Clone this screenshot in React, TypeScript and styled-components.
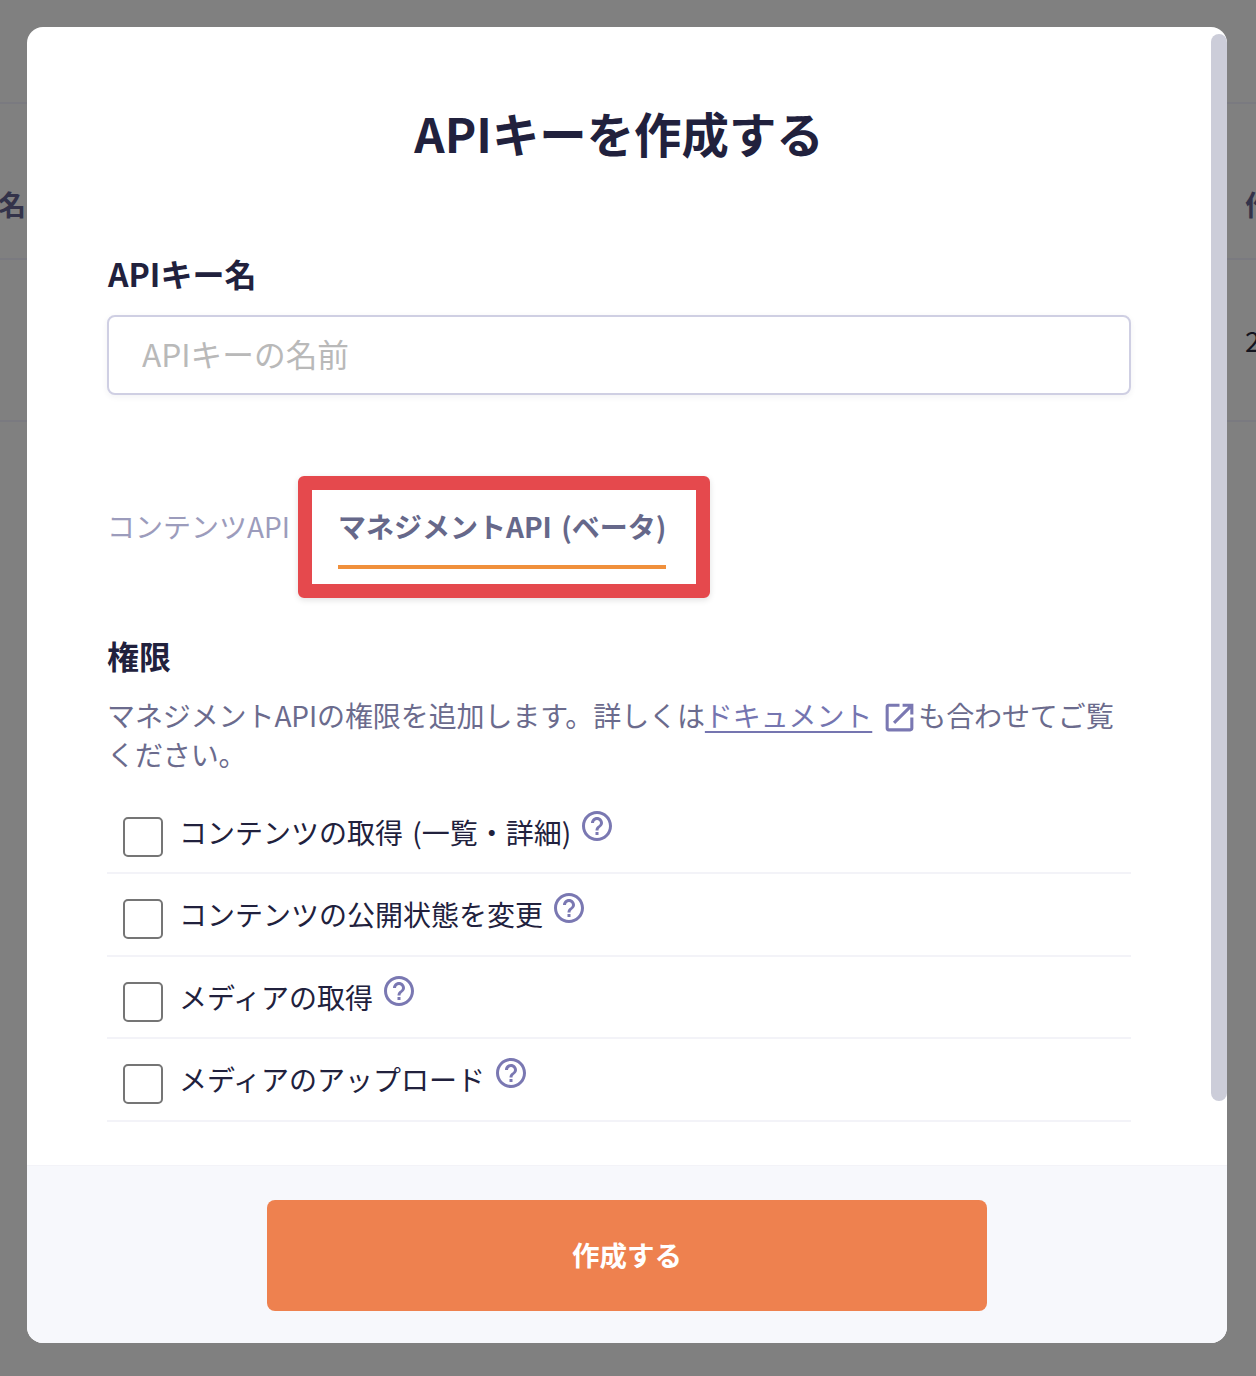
import React from 'react';
import styled, { createGlobalStyle } from 'styled-components';
import { MdHelpOutline, MdOpenInNew } from 'react-icons/md';

const GlobalStyle = createGlobalStyle`
  html, body {
    margin: 0;
    padding: 0;
    background: #808080;
  }

  * {
    box-sizing: border-box;
  }

  body {
    font-family: "Noto Sans CJK JP", "Noto Sans", sans-serif;
  }
`;

const Page = styled.div`
  position: relative;
  width: 1256px;
  height: 1376px;
  overflow: hidden;
  background: #808080;
`;

const Table = styled.div`
  padding-top: 102px;
`;

const TableRow = styled.div<{ $height: number; $offset?: number }>`
  display: flex;
  align-items: center;
  justify-content: space-between;
  height: ${(p) => p.$height}px;
  padding-top: ${(p) => p.$offset ?? 0}px;
  border-top: 2px solid #7a7a80;
`;

const LeftCell = styled.div`
  width: 26px;
  font-size: 28px;
  font-weight: 700;
  color: #33334a;
  direction: rtl;
  white-space: nowrap;
  overflow: hidden;
`;

const RightCell = styled.div<{ $strong?: boolean }>`
  width: 11px;
  margin-left: auto;
  font-size: 28px;
  font-weight: ${(p) => (p.$strong ? 700 : 400)};
  color: ${(p) => (p.$strong ? '#33334a' : '#14141f')};
  white-space: nowrap;
  overflow: hidden;
`;

const Modal = styled.div`
  position: absolute;
  top: 27px;
  left: 27px;
  display: flex;
  flex-direction: column;
  width: 1200px;
  height: 1316px;
  border-radius: 16px;
  background: #fff;
  overflow: hidden;
`;

const Scrollbar = styled.div`
  position: absolute;
  top: 7px;
  right: 0;
  width: 16px;
  height: 1067px;
  border-radius: 8px;
  background: #cccdd9;
`;

const Body = styled.div`
  flex: 1;
  padding: 72px 96px 0 80px;
`;

const Title = styled.h1`
  margin: 0;
  text-align: center;
  font-size: 47.4px;
  line-height: 68px;
  font-weight: 700;
  color: #21213d;
`;

const FieldLabel = styled.label`
  display: block;
  margin: 84px 0 0 1px;
  font-size: 32px;
  line-height: 44px;
  font-weight: 700;
  color: #21213d;
`;

const TextInput = styled.input`
  display: block;
  width: 100%;
  height: 80px;
  margin-top: 20px;
  padding: 0 32px 4px 33px;
  border: 2px solid #cfcfe3;
  border-radius: 8px;
  outline: none;
  box-shadow: 0 2px 6px rgba(33, 33, 61, 0.06);
  font-family: inherit;
  font-size: 31.7px;
  color: #21213d;

  &::placeholder {
    color: #b9b9b9;
    opacity: 1;
  }
`;

const Tabs = styled.div`
  display: flex;
  gap: 48px;
  margin-top: 112px;
`;

const Tab = styled.div<{ $active?: boolean }>`
  position: relative;
  padding-bottom: 20px;
  border-bottom: 4px solid ${(p) => (p.$active ? '#f0903c' : 'transparent')};
  font-size: 28px;
  line-height: 38px;
  word-spacing: 3px;
  font-weight: ${(p) => (p.$active ? 700 : 400)};
  color: ${(p) => (p.$active ? '#66688a' : '#9c9cbc')};
  white-space: nowrap;
`;

const Highlight = styled.div`
  position: absolute;
  top: -31px;
  right: -44px;
  bottom: -33px;
  left: -40px;
  border: 14px solid #e5494d;
  border-radius: 6px;
  box-shadow: 0 2px 6px rgba(0, 0, 0, 0.12);
  pointer-events: none;
`;

const SectionTitle = styled.h2`
  margin: 64px 0 0;
  font-size: 32px;
  line-height: 44px;
  font-weight: 700;
  color: #21213d;
`;

const Description = styled.p`
  margin: 19px 0 0;
  font-size: 28px;
  line-height: 38.5px;
  letter-spacing: -0.1px;
  color: #6b6b8d;
`;

const DocLink = styled.a`
  color: #7575b0;
  text-decoration: underline;
  text-underline-offset: 4px;
`;

const LinkIcon = styled(MdOpenInNew)`
  margin: -8px 0 -8px 9px;
  vertical-align: -1px;
  color: #7a78b2;
`;

const PermissionList = styled.ul`
  margin: 18.5px 0 0;
  padding: 0;
  list-style: none;
`;

const PermissionRow = styled.li`
  display: flex;
  align-items: center;
  height: 82.5px;
  padding-left: 16px;
  border-bottom: 2px solid #f3f3f8;
`;

const Checkbox = styled.input.attrs({ type: 'checkbox' })`
  appearance: none;
  flex: none;
  width: 40px;
  height: 40px;
  margin: 10px 16px 0 0;
  border: 2px solid #757575;
  border-radius: 5px;
  background: #fff;
`;

const PermissionName = styled.span`
  font-size: 28px;
  line-height: 40px;
  word-spacing: 3px;
  color: #21213d;
`;

const HelpIcon = styled(MdHelpOutline)`
  flex: none;
  margin: 0 0 12px 8px;
  color: #7a78b2;
`;

const Footer = styled.div`
  display: flex;
  justify-content: center;
  height: 178px;
  padding-top: 34px;
  border-top: 1px solid #f3f3f8;
  background: #f7f8fc;
`;

const SubmitButton = styled.button`
  width: 720px;
  height: 111px;
  padding: 0 0 4px;
  border: none;
  border-radius: 8px;
  background: #ee814f;
  font-family: inherit;
  font-size: 27.5px;
  font-weight: 700;
  color: #fff;
`;

const permissions = [
  'コンテンツの取得 (一覧・詳細)',
  'コンテンツの公開状態を変更',
  'メディアの取得',
  'メディアのアップロード',
];

const App = () => (
  <Page>
    <GlobalStyle />
    <Table>
      <TableRow $height={156} $offset={46}>
        <LeftCell>名</LeftCell>
        <RightCell $strong>作成日</RightCell>
      </TableRow>
      <TableRow $height={162}>
        <RightCell>2021</RightCell>
      </TableRow>
      <TableRow $height={2} />
    </Table>
    <Modal>
      <Body>
        <Title>APIキーを作成する</Title>
        <FieldLabel>APIキー名</FieldLabel>
        <TextInput placeholder="APIキーの名前" />
        <Tabs>
          <Tab>コンテンツAPI</Tab>
          <Tab $active>
            マネジメントAPI (ベータ)
            <Highlight />
          </Tab>
        </Tabs>
        <SectionTitle>権限</SectionTitle>
        <Description>
          マネジメントAPIの権限を追加します。詳しくは
          <DocLink href="#">ドキュメント</DocLink>
          <LinkIcon size={37} />
          も合わせてご覧ください。
        </Description>
        <PermissionList>
          {permissions.map((name) => (
            <PermissionRow key={name}>
              <Checkbox />
              <PermissionName>{name}</PermissionName>
              <HelpIcon size={36} />
            </PermissionRow>
          ))}
        </PermissionList>
      </Body>
      <Footer>
        <SubmitButton>作成する</SubmitButton>
      </Footer>
      <Scrollbar />
    </Modal>
  </Page>
);

export default App;
